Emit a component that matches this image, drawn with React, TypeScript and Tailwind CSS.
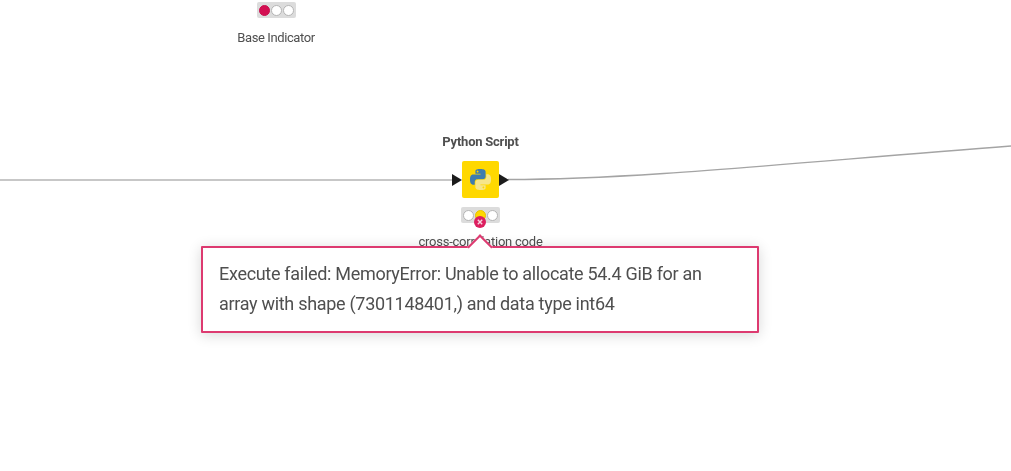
function TrafficLight({ active, error }: { active?: 'red' | 'yellow'; error?: boolean }) {
  return (
    <div className="relative flex h-[16px] w-[39px] items-center justify-center gap-[1px] rounded-[2px] bg-[#dcdcdc]">
      <span className={`h-[11px] w-[11px] rounded-full border ${active === 'red' ? 'border-[#c8104f] bg-[#d40f52]' : 'border-[#b5b5b5] bg-white'}`}></span>
      <span className={`h-[11px] w-[11px] rounded-full border ${active === 'yellow' ? 'border-[#e8c400] bg-[#ffd800]' : 'border-[#b5b5b5] bg-white'}`}></span>
      <span className="h-[11px] w-[11px] rounded-full border border-[#b5b5b5] bg-white"></span>
      {error && (
        <div className="absolute left-[13px] top-[9px] z-20 flex h-[12px] w-[12px] items-center justify-center rounded-full bg-[#dc1f5f]">
          <svg viewBox="0 0 12 12" className="h-[12px] w-[12px]" fill="none" stroke="#f7d5e0" strokeWidth="1.4">
            <path d="M3.8 3.8 L8.2 8.2 M8.2 3.8 L3.8 8.2" />
          </svg>
        </div>
      )}
    </div>
  );
}

function Port() {
  return <div className="h-0 w-0 border-y-[6.5px] border-l-[10px] border-y-transparent border-l-[#1c1c1c]"></div>;
}

function PythonLogo() {
  return (
    <svg viewBox="0 0 24 24" className="h-[21px] w-[21px]">
      <path
        fill="#3f7cae"
        d="M14.25.18l.9.2.73.26.59.3.45.32.34.34.25.34.16.33.1.3.04.26.02.2-.01.13V8.5l-.05.63-.13.55-.21.46-.26.38-.3.31-.33.25-.35.19-.35.14-.33.1-.3.07-.26.04-.21.02H8.77l-.69.05-.59.14-.5.22-.41.27-.33.32-.27.35-.2.36-.15.37-.1.35-.07.32-.04.27-.02.21v3.06H3.17l-.21-.03-.28-.07-.32-.12-.35-.18-.36-.26-.36-.36-.35-.46-.32-.59-.28-.73-.21-.88-.14-1.05-.05-1.23.06-1.22.16-1.04.24-.87.32-.71.36-.57.4-.44.42-.33.42-.24.4-.16.36-.1.32-.05.24-.01h.16l.06.01h8.16v-.83H6.18l-.01-2.75-.02-.37.05-.34.11-.31.17-.28.25-.26.31-.23.38-.2.44-.18.51-.15.58-.12.64-.1.71-.06.77-.04.84-.02 1.27.05zm-6.3 1.98l-.23.33-.08.41.08.41.23.34.33.22.41.09.41-.09.33-.22.23-.34.08-.41-.08-.41-.23-.33-.33-.22-.41-.09-.41.09z"
      />
      <path
        fill="#f6e58a"
        d="M21.04 6.11l.28.06.32.12.35.18.36.27.36.35.35.47.32.59.28.73.21.88.14 1.04.05 1.23-.06 1.23-.16 1.04-.24.86-.32.71-.36.57-.4.45-.42.33-.42.24-.4.16-.36.09-.32.05-.24.02-.16-.01h-8.22v.82h5.84l.01 2.76.02.36-.05.34-.11.31-.17.29-.25.25-.31.24-.38.2-.44.17-.51.15-.58.13-.64.09-.71.07-.77.04-.84.01-1.27-.04-1.07-.14-.9-.2-.73-.25-.59-.3-.45-.33-.34-.34-.25-.34-.16-.33-.1-.3-.04-.25-.02-.2.01-.13v-5.34l.05-.64.13-.54.21-.46.26-.38.3-.32.33-.24.35-.2.35-.14.33-.1.3-.06.26-.04.21-.02.13-.01h5.84l.69-.05.59-.14.5-.21.41-.28.33-.32.27-.35.2-.36.15-.36.1-.35.07-.32.04-.28.02-.21V6.07h2.09l.14.01zm-6.47 14.25l-.23.33-.08.41.08.41.23.33.33.23.41.08.41-.08.33-.23.23-.33.08-.41-.08-.41-.23-.33-.33-.23-.41-.08-.41.08z"
      />
    </svg>
  );
}

export default function App() {
  return (
    <div className="relative h-[471px] w-[1011px] overflow-hidden bg-white font-['Roboto',sans-serif] text-[#4f4f4f] blur-[0.35px]">
      {/* connections */}
      <svg className="absolute inset-0" width="1011" height="471" fill="none">
        <path d="M0 180 H452" stroke="#b4b4b4" strokeWidth="1.6" />
        <path d="M508 179.5 C 640 179.5, 800 162, 1011 146" stroke="#a4a4a4" strokeWidth="1.4" />
      </svg>

      {/* Base Indicator node */}
      <div className="absolute left-[216px] top-[2px] flex w-[120px] flex-col items-center gap-[12px]">
        <TrafficLight active="red" />
        <span className="text-[13px] leading-[16px] tracking-[-0.4px]">Base Indicator</span>
      </div>

      {/* Python Script node */}
      <div className="absolute left-[400px] top-[134px] flex w-[161px] flex-col items-center">
        <span className="text-[13px] font-bold leading-[16px] tracking-[-0.23px]">Python Script</span>
        <div className="mt-[11px] flex items-center">
          <Port />
          <div className="flex h-[37px] w-[37px] items-center justify-center rounded-[2px] bg-[#ffd800]">
            <PythonLogo />
          </div>
          <Port />
        </div>
        <div className="mt-[9px]">
          <TrafficLight active="yellow" error />
        </div>
        <span className="mt-[11px] text-[13px] leading-[16px] tracking-[-0.23px]">cross-correlation code</span>
      </div>

      {/* error tooltip */}
      <div className="absolute left-[201px] top-[246px] z-10 h-[87px] w-[558px] rounded-[1px] border-2 border-[#dd3a70] bg-white px-[16px] py-[11px] text-[18px] leading-[29.5px] tracking-[-0.3px] shadow-[0_2px_14px_rgba(0,0,0,0.16)]">
        Execute failed: MemoryError: Unable to allocate 54.4 GiB for an
        <br />
        array with shape (7301148401,) and data type int64
        <div className="absolute left-[268px] top-[-10px] h-[18px] w-[18px] rotate-45 border-l-2 border-t-2 border-[#dd3a70] bg-white"></div>
      </div>
    </div>
  );
}
